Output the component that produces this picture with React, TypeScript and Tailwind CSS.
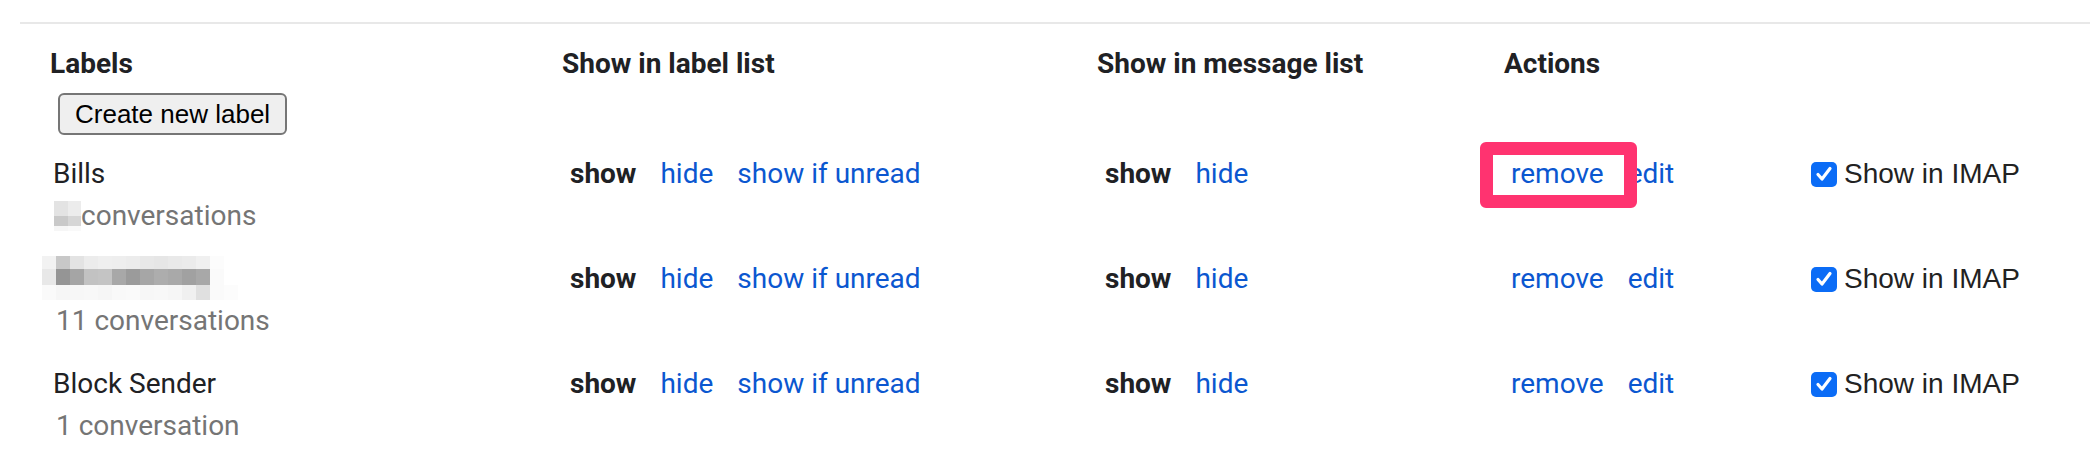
import React from 'react';

const row2Pixels = [
  ['#f2f2f2', '#c8c8c8', '#e3e3e3', '#ececec', '#efefef', '#eeeeee', '#ececec', '#e8e8e8', '#e6e6e6', '#e9e9e9', '#ebebeb', '#f0f0f0', '#fcfcfc', '#ffffff'],
  ['#e8e8e8', '#959595', '#a5a5a5', '#c2c2c2', '#c4c4c4', '#a8a8a8', '#9b9b9b', '#a6a6a6', '#adadad', '#a9a9a9', '#a1a1a1', '#a8a8a8', '#fafafa', '#ffffff'],
  ['#fafafa', '#f6f6f6', '#f7f7f7', '#f8f8f8', '#f6f6f6', '#f9f9f9', '#fafafa', '#f7f7f7', '#f8f8f8', '#f6f6f6', '#f0f0f0', '#e0e0e0', '#fafafa', '#fcfcfc'],
];

const row1Pixels = [
  ['#e3e3e3', '#ececec'],
  ['#c9c9c9', '#d6d6d6'],
  ['#f6f6f6', '#f9f9f9'],
];

const rowHeights = ['h-[13px]', 'h-[16px]', 'h-[15px]'];
const smallHeights = ['h-[15px]', 'h-[10px]', 'h-[5px]'];

const Checkbox = () => (
  <div className="w-[26px] h-[25px] rounded-[5px] bg-[#0b6cf6] flex items-center justify-center">
    <svg width="18" height="18" viewBox="0 0 18 18">
      <path d="M3 9.5 L7 14 L15 3.5" stroke="#fff" strokeWidth="3.2" fill="none" strokeLinecap="round" strokeLinejoin="round" />
    </svg>
  </div>
);

const Links = ({ unread }: { unread?: boolean }) => (
  <div className="flex gap-[24px] pl-[8px] leading-[42px]">
    <span className="font-bold text-[#202124]">show</span>
    <a className="text-[#0b57d0]">hide</a>
    {unread && <a className="text-[#0b57d0]">show if unread</a>}
  </div>
);

const Row = ({ name, count, highlight }: { name: React.ReactNode; count: React.ReactNode; highlight?: boolean }) => (
  <div className="grid grid-cols-[512px_535px_407px_307px_1fr] pb-[21px]">
    <div className="leading-[42px]">
      <div className="pl-[3px] h-[42px] flex items-center text-[#202124]">{name}</div>
      <div className="pl-[6px] text-[#757575] flex items-center h-[42px]">{count}</div>
    </div>
    <Links unread />
    <Links />
    <div className="relative flex gap-[24px] pl-[7px] leading-[42px] text-[#0b57d0]">
      <a>remove</a>
      <a>edit</a>
      {highlight && (
        <div className="absolute left-[-24px] top-[-11px] w-[157px] h-[66px] border-[13px] border-[#ff3370] rounded-[6px]" />
      )}
    </div>
    <div className="flex items-center gap-[7px] h-[42px] font-['Liberation_Sans',sans-serif] text-[28px] text-[#222]">
      <Checkbox />
      <span>Show in IMAP</span>
    </div>
  </div>
);

export default function App() {
  return (
    <div className="w-[2090px] h-[460px] bg-white pt-[22px] font-['Roboto',sans-serif] text-[28px] overflow-hidden">
      <div className="ml-5 border-t-2 border-[#e8e8e8]" />
      <div className="pl-[50px] pt-[19px]">
        <div className="grid grid-cols-[512px_535px_407px_307px_1fr] leading-[42px] font-bold text-[#202124]">
          <div>Labels</div>
          <div>Show in label list</div>
          <div>Show in message list</div>
          <div>Actions</div>
          <div />
        </div>
        <button className="mt-2 ml-[8px] h-[42px] px-[15px] border-2 border-[#767676] rounded-[6px] bg-[#efefef] font-['Liberation_Sans',sans-serif] text-[26px] text-black leading-none">
          Create new label
        </button>
        <div className="pt-[18px]">
          <Row
            name="Bills"
            highlight
            count={
              <>
                <span className="inline-flex flex-col w-[27px] -ml-[2px]">
                  {row1Pixels.map((r, i) => (
                    <span key={i} className={`flex ${smallHeights[i]}`}>
                      {r.map((c, j) => (
                        <span key={j} className="flex-1" style={{ backgroundColor: c }} />
                      ))}
                    </span>
                  ))}
                </span>
                conversations
              </>
            }
          />
          <Row
            name={
              <div className="-ml-[11px] flex flex-col -mt-[3px]">
                {row2Pixels.map((r, i) => (
                  <div key={i} className={`flex ${rowHeights[i]}`}>
                    {r.map((c, j) => (
                      <div key={j} className="w-[14px]" style={{ backgroundColor: c }} />
                    ))}
                  </div>
                ))}
              </div>
            }
            count="11 conversations"
          />
          <Row name="Block Sender" count="1 conversation" />
        </div>
      </div>
    </div>
  );
}
